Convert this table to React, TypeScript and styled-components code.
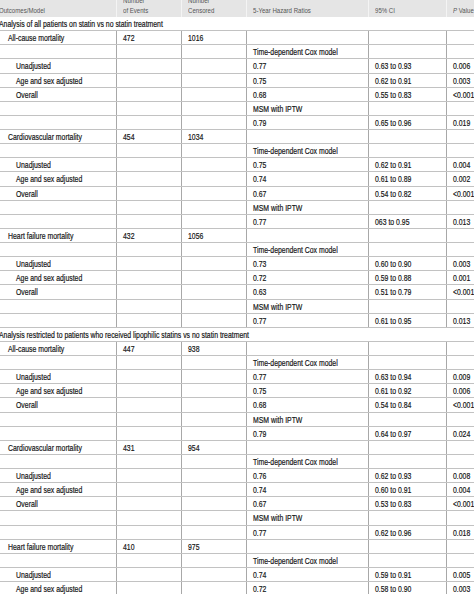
import React from 'react'
import styled, { createGlobalStyle } from 'styled-components'

const GlobalStyle = createGlobalStyle`
  html, body {
    margin: 0;
    padding: 0;
    background: #fff;
    overflow: hidden;
  }
`

const COLS = '123px 65px 65px 122px 78px 60px'
const ROW_H = 14.14

const Sheet = styled.div`
  margin: -9px 0 0 -7px;
  width: 513px;
  font-family: "Liberation Sans", Arial, sans-serif;
  color: #141414;
`

// the source table uses a condensed face; narrow the regular one
const Txt = styled.span<{ $sx?: number }>`
  display: inline-block;
  white-space: nowrap;
  transform: scaleX(${p => p.$sx ?? 0.725});
  transform-origin: left center;
`

const HeadRow = styled.div`
  display: grid;
  grid-template-columns: ${COLS};
  height: 26px;
  background: #e5e5e5;
`

const HeadCell = styled.div<{ $first?: boolean }>`
  display: flex;
  flex-direction: column;
  justify-content: flex-end;
  padding: 0 0 1px 6px;
  font-size: 8px;
  line-height: 10px;
  color: #555;
  border-left: ${p => (p.$first ? 'none' : '1px solid #f4f4f4')};
`

const Row = styled.div`
  display: grid;
  grid-template-columns: ${COLS};
  height: ${ROW_H}px;
  box-sizing: border-box;
  border-bottom: 1px solid #c2c2c2;
`

const SectionRow = styled.div`
  height: ${ROW_H}px;
  box-sizing: border-box;
  border-bottom: 1px solid #c2c2c2;
  padding-left: 6px;
  display: flex;
  align-items: center;
  font-size: 9.5px;
  -webkit-text-stroke: 0.2px #141414;
`

const Cell = styled.div<{ $indent?: number; $first?: boolean }>`
  display: flex;
  align-items: center;
  padding-left: ${p => 6 + (p.$indent ?? 0)}px;
  font-size: 9.5px;
  overflow: hidden;
  -webkit-text-stroke: 0.2px #141414;
  border-left: ${p => (p.$first ? 'none' : '1px solid #a8a8a8')};
`

const Italic = styled.i`
  font-style: italic;
`

type Line =
  | { kind: 'section'; text: string }
  | { kind: 'outcome'; name: string; events: string; censored: string }
  | { kind: 'model'; text: string }
  | { kind: 'result'; label?: string; hr: string; ci: string; p: string }

const block = (
  name: string,
  events: string,
  censored: string,
  cox: [string, string, string][],
  msm: [string, string, string]
): Line[] => {
  const labels = ['Unadjusted', 'Age and sex adjusted', 'Overall']
  return [
    { kind: 'outcome', name, events, censored },
    { kind: 'model', text: 'Time-dependent Cox model' },
    ...cox.map((r, i): Line => ({ kind: 'result', label: labels[i], hr: r[0], ci: r[1], p: r[2] })),
    { kind: 'model', text: 'MSM with IPTW' },
    { kind: 'result', hr: msm[0], ci: msm[1], p: msm[2] },
  ]
}

const lines: Line[] = [
  { kind: 'section', text: 'Analysis of all patients on statin vs no statin treatment' },
  ...block('All-cause mortality', '472', '1016',
    [['0.77', '0.63 to 0.93', '0.006'], ['0.75', '0.62 to 0.91', '0.003'], ['0.68', '0.55 to 0.83', '<0.001']],
    ['0.79', '0.65 to 0.96', '0.019']),
  ...block('Cardiovascular mortality', '454', '1034',
    [['0.75', '0.62 to 0.91', '0.004'], ['0.74', '0.61 to 0.89', '0.002'], ['0.67', '0.54 to 0.82', '<0.001']],
    ['0.77', '063 to 0.95', '0.013']),
  ...block('Heart failure mortality', '432', '1056',
    [['0.73', '0.60 to 0.90', '0.003'], ['0.72', '0.59 to 0.88', '0.001'], ['0.63', '0.51 to 0.79', '<0.001']],
    ['0.77', '0.61 to 0.95', '0.013']),
  { kind: 'section', text: 'Analysis restricted to patients who received lipophilic statins vs no statin treatment' },
  ...block('All-cause mortality', '447', '938',
    [['0.77', '0.63 to 0.94', '0.009'], ['0.75', '0.61 to 0.92', '0.006'], ['0.68', '0.54 to 0.84', '<0.001']],
    ['0.79', '0.64 to 0.97', '0.024']),
  ...block('Cardiovascular mortality', '431', '954',
    [['0.76', '0.62 to 0.93', '0.008'], ['0.74', '0.60 to 0.91', '0.004'], ['0.67', '0.53 to 0.83', '<0.001']],
    ['0.77', '0.62 to 0.96', '0.018']),
  ...block('Heart failure mortality', '410', '975',
    [['0.74', '0.59 to 0.91', '0.005'], ['0.72', '0.58 to 0.90', '0.003'], ['0.63', '0.51 to 0.79', '<0.001']],
    ['0.77', '0.61 to 0.95', '0.013']),
]

const renderLine = (l: Line, i: number) => {
  if (l.kind === 'section') return <SectionRow key={i}><Txt>{l.text}</Txt></SectionRow>
  const cells: [string, number][] =
    l.kind === 'outcome'
      ? [[l.name, 9], [l.events, 0], [l.censored, 0], ['', 0], ['', 0], ['', 0]]
      : l.kind === 'model'
      ? [['', 0], ['', 0], ['', 0], [l.text, 0], ['', 0], ['', 0]]
      : [[l.label ?? '', 17], ['', 0], ['', 0], [l.hr, 0], [l.ci, 0], [l.p, 0]]
  return (
    <Row key={i}>
      {cells.map(([t, ind], j) => (
        <Cell key={j} $first={j === 0} $indent={ind}>{t && <Txt>{t}</Txt>}</Cell>
      ))}
    </Row>
  )
}

export default function App() {
  return (
    <>
      <GlobalStyle />
      <Sheet>
        <HeadRow>
          <HeadCell $first><Txt $sx={0.76}>Outcomes/Model</Txt></HeadCell>
          <HeadCell><Txt $sx={0.76}>Number</Txt><Txt $sx={0.76}>of Events</Txt></HeadCell>
          <HeadCell><Txt $sx={0.76}>Number</Txt><Txt $sx={0.76}>Censored</Txt></HeadCell>
          <HeadCell><Txt $sx={0.76}>5-Year Hazard Ratios</Txt></HeadCell>
          <HeadCell><Txt $sx={0.76}>95% CI</Txt></HeadCell>
          <HeadCell><Txt $sx={0.76}><Italic>P</Italic> Value</Txt></HeadCell>
        </HeadRow>
        {lines.map(renderLine)}
      </Sheet>
    </>
  )
}
